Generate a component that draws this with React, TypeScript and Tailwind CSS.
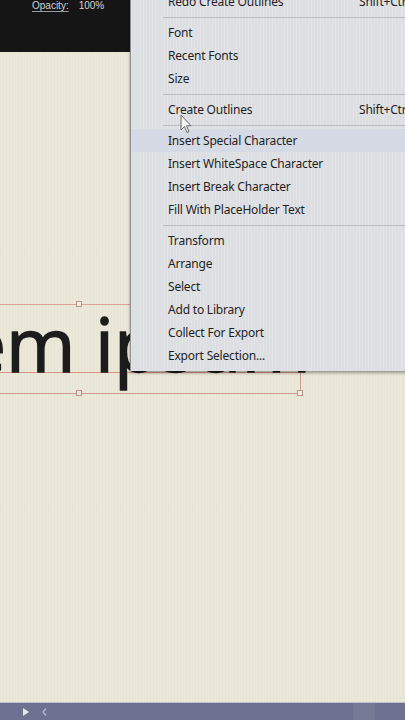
const menuGroups: { label: string; shortcut?: string; active?: boolean }[][] = [
  [{ label: 'Redo Create Outlines', shortcut: 'Shift+Ctrl+Z' }],
  [{ label: 'Font' }, { label: 'Recent Fonts' }, { label: 'Size' }],
  [{ label: 'Create Outlines', shortcut: 'Shift+Ctrl+O' }],
  [
    { label: 'Insert Special Character', active: true },
    { label: 'Insert WhiteSpace Character' },
    { label: 'Insert Break Character' },
    { label: 'Fill With PlaceHolder Text' },
  ],
  [
    { label: 'Transform' },
    { label: 'Arrange' },
    { label: 'Select' },
    { label: 'Add to Library' },
    { label: 'Collect For Export' },
    { label: 'Export Selection...' },
  ],
];

const Handle = ({ className }: { className: string }) => (
  <div className={`absolute w-[6px] h-[6px] bg-[#f3efe6] border border-[#c98e84] ${className}`} />
);

const ContextMenu = () => (
  <div className="absolute left-[130px] top-[-12px] w-[340px] pt-[2px] pb-[4px] bg-[#dddee2] bg-[repeating-linear-gradient(90deg,rgba(255,255,255,0.16)_0px,rgba(255,255,255,0.16)_1px,transparent_1px,transparent_3px)] border-l border-[#8f9094] shadow-[0_2px_3px_rgba(0,0,0,0.35)] font-['Noto_Sans',sans-serif] text-[12px] tracking-[-0.2px] text-[#1f1f1f]">
    {menuGroups.map((group, gi) => (
      <div key={gi}>
        {gi > 0 && (
          <div className="h-[8px] flex items-center pl-[32px]">
            <div className="w-full h-px bg-[#bcbdc2]" />
          </div>
        )}
        {group.map((item) => (
          <div
            key={item.label}
            className={`h-[23px] flex items-center pl-[37px] ${item.active ? 'bg-[#d5dae5]' : ''}`}
          >
            <span className="w-[191px] whitespace-nowrap">{item.label}</span>
            {item.shortcut && <span className="whitespace-nowrap">{item.shortcut}</span>}
          </div>
        ))}
      </div>
    ))}
  </div>
);

const Cursor = () => (
  <svg className="absolute left-[180px] top-[114px]" width="12" height="20" viewBox="0 0 12 20">
    <path d="M1 1 L1 16 L4.5 12.5 L7 18.5 L9 17.5 L6.5 11.8 L11 11.8 Z" fill="#f4f4f4" stroke="#6b6b6b" strokeWidth="1" />
  </svg>
);

export default function App() {
  return (
    <div className="w-[405px] h-[720px] flex flex-col overflow-hidden bg-[#ebe8d9]">
      <div className="relative flex-1 bg-[repeating-linear-gradient(90deg,rgba(0,0,0,0.015)_0px,rgba(0,0,0,0.015)_1px,transparent_1px,transparent_3px)]">
        {/* control panel strip */}
        <div className="w-[130px] h-[52px] bg-[#151515] flex items-start gap-[10px] pl-[32px] font-['Liberation_Sans',sans-serif] text-[10px] leading-[12px] text-[#d4d4d4]">
          <span className="underline underline-offset-2 decoration-[#9a9a9a]">Opacity:</span>
          <span>100%</span>
        </div>

        {/* text object on artboard */}
        <div className="absolute left-0 top-[304px] w-[301px] h-px bg-[#dba398]" />
        <div className="absolute left-0 top-[372px] w-[301px] h-px bg-[#d49488]" />
        <div className="absolute left-0 top-[393px] w-[301px] h-px bg-[#cf9a8f]" />
        <div className="absolute left-[300px] top-[304px] w-px h-[90px] bg-[#cf9a8f]" />
        <div className="absolute left-[-36px] top-[306px] leading-none whitespace-nowrap font-['Open_Sans',sans-serif] text-[75px] text-[#1c1c1c] [-webkit-text-stroke:1.4px_#1c1c1c]">
          em ipsum
        </div>
        <Handle className="left-[76px] top-[301px]" />
        <Handle className="left-[76px] top-[390px]" />
        <Handle className="left-[297px] top-[390px]" />

        <ContextMenu />
        <Cursor />
      </div>

      {/* status bar */}
      <div className="h-[18px] bg-[#6c7290] border-t border-[#bfc1cc] flex items-center pl-[23px] gap-[13px]">
        <svg width="6" height="8" viewBox="0 0 6 8">
          <path d="M0 0 L6 4 L0 8 Z" fill="#e3e5ee" />
        </svg>
        <svg width="5" height="8" viewBox="0 0 5 8">
          <path d="M4 0.5 L1 4 L4 7.5" fill="none" stroke="#b9bdd0" strokeWidth="1.2" />
        </svg>
        <div className="ml-auto mr-[30px] w-[22px] h-full bg-[#757b97]" />
      </div>
    </div>
  );
}
